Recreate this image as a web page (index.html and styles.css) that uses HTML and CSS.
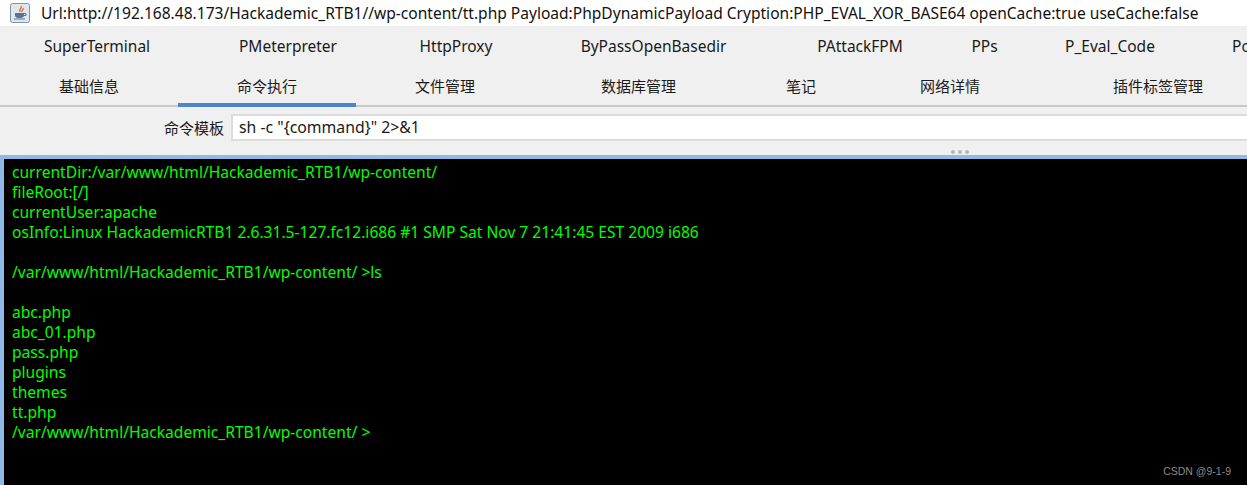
FILE: index.html
```html
<!DOCTYPE html>
<html lang="zh-CN">
<head>
<meta charset="utf-8">
<title>Shell</title>
<link rel="stylesheet" href="styles.css">
</head>
<body>
<div class="app">
  <header class="titlebar">
    <svg class="appicon" width="20" height="20" viewBox="0 0 20 20">
      <rect x="0.500" y="0.500" width="19" height="19" rx="2" fill="#dfe6ee" stroke="#7f93a8"/>
      <path d="M11 3c2 2-3 3-1 6M13 5c1 2-2 2-1 4" fill="none" stroke="#e8762c" stroke-width="1.500"/>
      <path d="M5 10h9v2.500c0 1.500-1.500 2.500-3 2.500H8c-1.500 0-3-1-3-2.500z" fill="#5a7590"/>
      <path d="M14 10.500h2v2h-2M4 16h11" fill="none" stroke="#5a7590"/>
    </svg>
    <span class="titletext">Url:http://192.168.48.173/Hackademic_RTB1//wp-content/tt.php Payload:PhpDynamicPayload Cryption:PHP_EVAL_XOR_BASE64 openCache:true useCache:false</span>
  </header>
  <nav class="tabs tabs-plugins">
    <span class="tab">SuperTerminal</span>
    <span class="tab">PMeterpreter</span>
    <span class="tab">HttpProxy</span>
    <span class="tab">ByPassOpenBasedir</span>
    <span class="tab">PAttackFPM</span>
    <span class="tab">PPs</span>
    <span class="tab">P_Eval_Code</span>
    <span class="tab tab-cut">PortScan</span>
  </nav>
  <nav class="tabs tabs-main">
    <span class="tab">基础信息</span>
    <span class="tab tab-active">命令执行</span>
    <span class="tab">文件管理</span>
    <span class="tab">数据库管理</span>
    <span class="tab">笔记</span>
    <span class="tab">网络详情</span>
    <span class="tab">插件标签管理</span>
  </nav>
  <div class="template">
    <label class="template-label">命令模板</label>
    <div class="template-input">sh -c "{command}" 2&gt;&amp;1</div>
  </div>
  <div class="splitter"><i></i><i></i><i></i></div>
  <main class="terminal">
<pre class="console">currentDir:/var/www/html/Hackademic_RTB1/wp-content/
fileRoot:[/]
currentUser:apache
osInfo:Linux HackademicRTB1 2.6.31.5-127.fc12.i686 #1 SMP Sat Nov 7 21:41:45 EST 2009 i686

/var/www/html/Hackademic_RTB1/wp-content/ &gt;ls

abc.php
abc_01.php
pass.php
plugins
themes
tt.php
/var/www/html/Hackademic_RTB1/wp-content/ &gt;</pre>
    <span class="watermark">CSDN @9-1-9</span>
  </main>
</div>
</body>
</html>
```
FILE: styles.css
```css
* { box-sizing: border-box; }
html, body { margin: 0; padding: 0; }
body {
  width: 1247px;
  height: 485px;
  overflow: hidden;
  background: #f0f0f0;
  font-family: "Noto Sans", "Noto Sans CJK SC", sans-serif;
  font-size: 15px;
  color: #1a1a1a;
}
.app { display: flex; flex-direction: column; height: 485px; overflow: hidden; }
.titlebar {
  display: flex;
  align-items: center;
  height: 26px;
  background: #fff;
  padding-left: 10px;
  gap: 11px;
  flex: none;
}
.appicon { flex: none; }
.titletext { white-space: nowrap; font-size: 15.55px; color: #111; }
.tabs { display: grid; flex: none; height: 39px; overflow: hidden; }
.tabs-plugins { grid-template-columns: 194px 188px 148px 247px 166px 83px 168px 200px; font-size: 15.5px; }
.tabs-main {
  grid-template-columns: 178px 178px 178px 209px 116px 182px 234px;
  height: 42px;
  border-bottom: 2px solid #c8c8c8;
  overflow: visible;
}
.tab {
  display: flex;
  align-items: center;
  justify-content: center;
  white-space: nowrap;
  height: 40px;
}
.tab-cut { justify-content: flex-start; padding-left: 38px; }
.tab-active { position: relative; }
.tab-active::after {
  content: "";
  position: absolute;
  left: 0;
  right: 0;
  bottom: -2px;
  height: 4px;
  background: #4a86c8;
}
.template {
  display: flex;
  align-items: center;
  height: 34px;
  padding-top: 7px;
  flex: none;
}
.template-label { width: 224px; text-align: right; flex: none; padding-bottom: 1px; }
.template-input {
  margin-left: 7px;
  flex: 1;
  height: 27px;
  background: #fff;
  border: 1px solid #dcdcdc;
  border-width: 2px 0 2px 2px;
  padding-left: 6px;
  font-size: 15.8px;
  line-height: 22px;
  white-space: nowrap;
}
.splitter {
  display: flex;
  justify-content: center;
  align-items: center;
  gap: 3px;
  height: 14px;
  padding-left: 673px;
  padding-top: 8px;
  flex: none;
}
.splitter i { width: 4px; height: 4px; border-radius: 50%; background: #b8b8b8; }
.terminal {
  position: relative;
  flex: 1;
  background: #000;
  border-top: 4px solid #8fb9e8;
  border-left: 4px solid #8fb9e8;
}
.console {
  margin: 0;
  padding: 3px 0 0 8px;
  font: inherit;
  font-size: 15.6px;
  line-height: 20px;
  color: #00ff00;
  white-space: pre;
}
.watermark {
  position: absolute;
  right: 16px;
  bottom: 8px;
  font-family: "Liberation Sans", sans-serif;
  font-size: 10.5px;
  color: #8a8a8a;
}
```
